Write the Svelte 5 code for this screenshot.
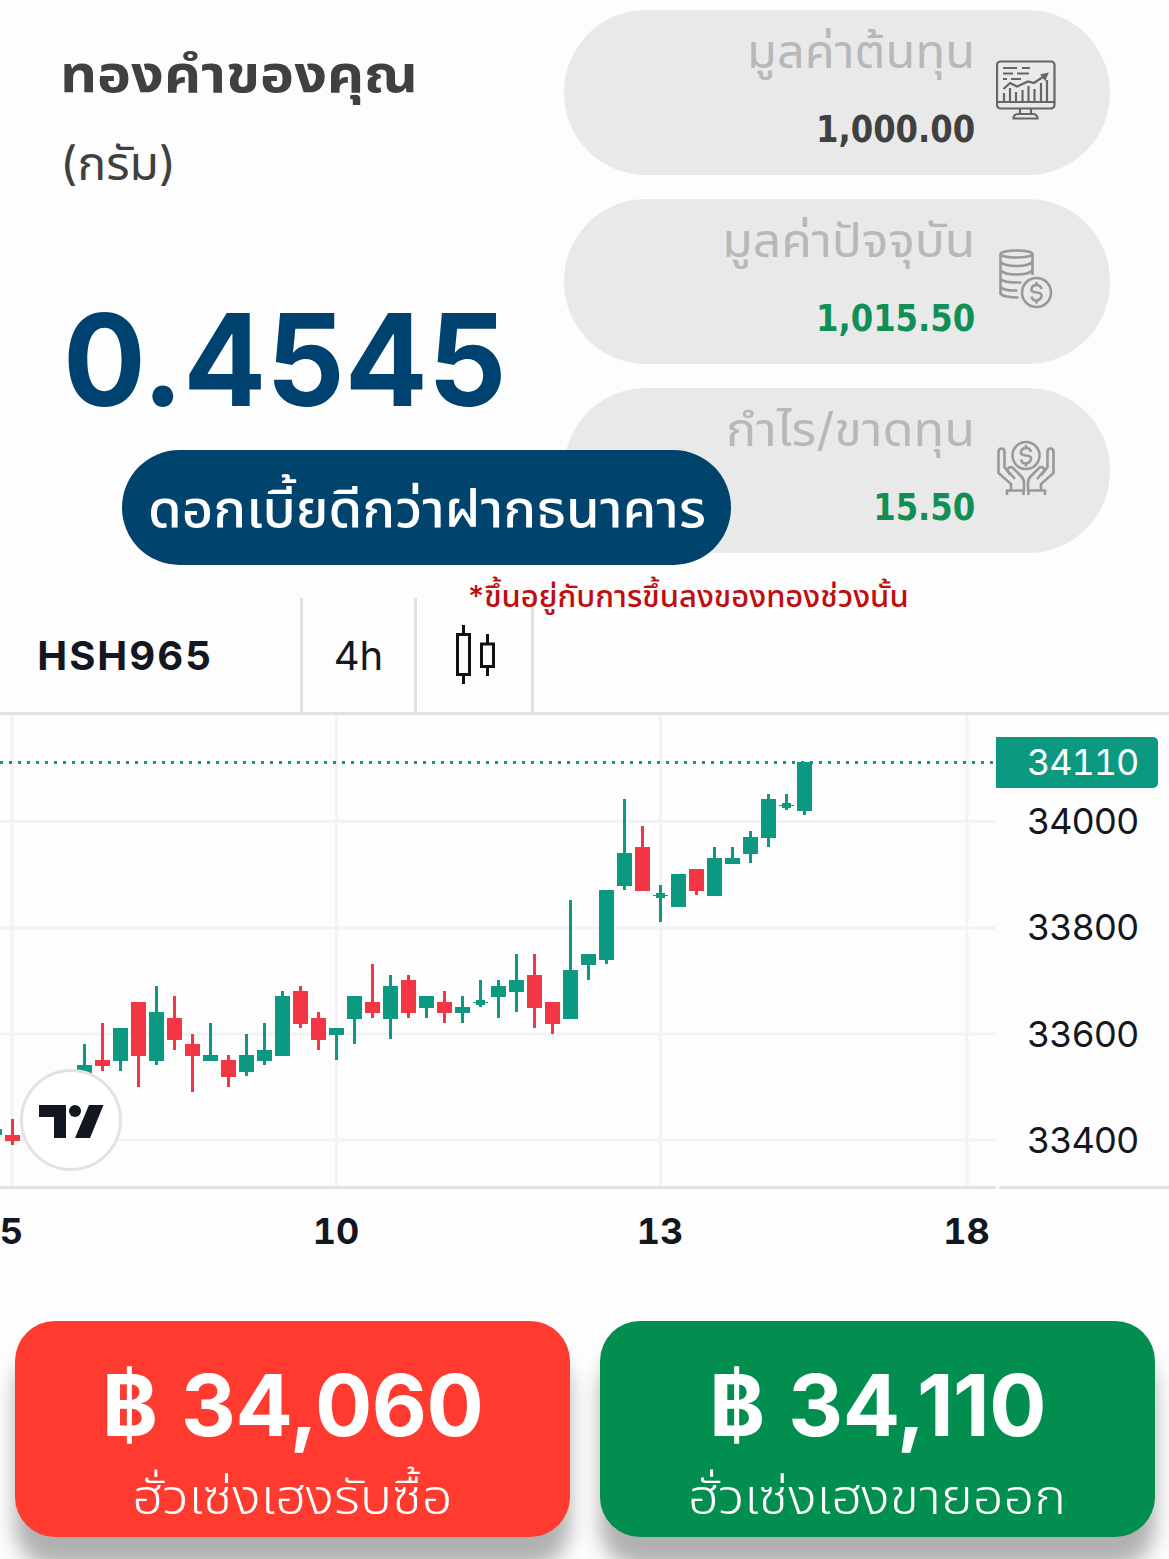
<script>
  const UP = '#0c9981';
  const DOWN = '#f23645';

  // [up, high, body top, body bottom, low], 18px apart from x = -5.5
  const candles = [
    [1, 1129, 1129, 1135, 1135], [0, 1119, 1135, 1141, 1145], null, null, null,
    [1, 1044, 1065, 1077, 1077], [0, 1023, 1060, 1066, 1071], [1, 1028, 1028, 1061, 1071],
    [0, 1002, 1002, 1056, 1087], [1, 986, 1012, 1061, 1065], [0, 996, 1018, 1040, 1050],
    [0, 1034, 1044, 1056, 1092], [1, 1023, 1055, 1061, 1061], [0, 1055, 1060, 1077, 1087],
    [1, 1034, 1055, 1072, 1076], [1, 1023, 1050, 1061, 1065], [1, 991, 996, 1056, 1056],
    [0, 986, 991, 1024, 1028], [0, 1012, 1018, 1040, 1050], [1, 1028, 1028, 1035, 1060],
    [1, 996, 996, 1019, 1044], [0, 964, 1002, 1013, 1018], [1, 975, 986, 1019, 1039],
    [0, 975, 980, 1013, 1018], [1, 996, 996, 1008, 1018], [0, 991, 1002, 1013, 1023],
    [1, 996, 1007, 1013, 1023], [1, 980, 1002, 1003, 1007], [1, 980, 986, 997, 1018],
    [1, 954, 980, 992, 1012], [0, 954, 975, 1008, 1028], [0, 1002, 1002, 1024, 1034],
    [1, 900, 970, 1019, 1019], [1, 954, 954, 965, 980], [1, 890, 890, 960, 964],
    [1, 799, 853, 886, 890], [0, 826, 847, 891, 891], [1, 885, 895, 896, 922],
    [1, 874, 874, 907, 907], [0, 869, 869, 891, 895], [1, 847, 858, 896, 896],
    [1, 847, 858, 864, 864], [1, 831, 837, 854, 863], [1, 794, 799, 838, 847],
    [1, 794, 805, 806, 810], [1, 762, 762, 811, 815],
  ];

  const prices = [
    { y: 821.5, label: '34000' },
    { y: 928, label: '33800' },
    { y: 1034, label: '33600' },
    { y: 1140, label: '33400' },
  ];

  const days = [
    { x: 11.5, label: '5' },
    { x: 336, label: '10' },
    { x: 660, label: '13' },
    { x: 966.5, label: '18' },
  ];

  const stats = [
    { label: 'มูลค่าต้นทุน', value: '1,000.00', icon: 'monitor', stretch: 1.06 },
    { label: 'มูลค่าปัจจุบัน', value: '1,015.50', icon: 'coins', stretch: 1.08, gain: true },
    { label: 'กำไร/ขาดทุน', value: '15.50', icon: 'hands', stretch: 1.097, gain: true },
  ];
</script>

<div class="page">
  <header>
    <div class="holding">
      <h1>ทองคำของคุณ</h1>
      <p class="unit">(กรัม)</p>
      <p class="amount">0.4545</p>
    </div>

    <div class="stats">
      {#each stats as stat}
        <div class="stat">
          <div class="stat-text">
            <span class="stat-label" style="transform: scaleX({stat.stretch})">{stat.label}</span>
            <span class="stat-value" class:gain={stat.gain}>{stat.value}</span>
          </div>
          {#if stat.icon === 'monitor'}
            <svg class="icon dark" viewBox="0 0 60 60">
              <rect x="1" y="1.5" width="57.5" height="47" rx="3.5"/>
              <path d="M1 42h57M24 49v6M35 49v6M17.500 58.500q0-4.500 5-4.500h14q5 0 5 4.500z"/>
              <path d="M7 8h14M26 8h8M7 13.500h10M21 13.500h12M7 19h4M15 19h10"/>
              <path d="M7.500 29l6.500-6 7 3.500 11-5 6 1.500L49 15.500M46 15l5-1-2 5z"/>
              <path d="M8 33v8M14 28v13M20 32v9M26.500 30v11M32.500 26v15M38.500 29v12M45 23v18M51 20v21"/>
            </svg>
          {:else if stat.icon === 'coins'}
            <svg class="icon" viewBox="0 0 60 60">
              <ellipse cx="20.5" cy="5" rx="16" ry="3.5"/>
              <path d="M4.500 5v40q4 3.500 18 3.500M36.500 5v21M4.500 13q4 4 16 4t16-4M4.500 21.500q4 4 16 4t16-4M4.500 30q4 4 21 3.500M4.500 38q4 4 17 3.500"/>
              <circle cx="40.5" cy="43.5" r="14.5"/>
              <path d="M45.500 40q-1-4-5-4t-5 3.500 5 4 5 4-5 4-5-4M40.500 33v3M40.500 51.500v3"/>
            </svg>
          {:else}
            <svg class="icon" viewBox="0 -2 60 60">
              <circle cx="30" cy="15.5" r="13.5"/>
              <path d="M35 12q-1-4-5-4t-5 3.500 5 4 5 4-5 4-5-4M30 5v3M30 23.500v3"/>
              <path d="M15 50.500V44L2.500 33V12q0-3.500 3-3.500t3 3.500v15l6 8M19 39l-7-8q-1-4 4-4l9 9q3 3 3 7v8M11 55v-4.500h18M27.500 51.500V55"/>
              <path d="M45 50.500V44l12.500-11V12q0-3.500-3-3.500t-3 3.500v15l-6 8M41 39l7-8q1-4-4-4l-9 9q-3 3-3 7v8M49 55v-4.500H31M32.500 51.500V55"/>
            </svg>
          {/if}
        </div>
      {/each}
    </div>

    <div class="banner"><span>ดอกเบี้ยดีกว่าฝากธนาคาร</span></div>
    <p class="note">*ขึ้นอยู่กับการขึ้นลงของทองช่วงนั้น</p>
  </header>

  <nav>
    <div class="symbol">HSH965</div>
    <div class="interval">4h</div>
    <div class="style">
      <svg width="44" height="62" viewBox="0 0 44 62">
        <path d="M11.500 1v9M11.500 51v9M5.500 10.500h12v40h-12zM35.500 10v9M35.500 43v9M29.500 20h12v22.500h-12z"/>
      </svg>
    </div>
  </nav>

  <div class="chart">
    <svg class="plot" width="996" height="471" viewBox="0 715 996 471">
      {#each prices as p}
        <rect class="grid" x="0" y={p.y - 1.5} width="996" height="3"/>
      {/each}
      {#each days as d}
        <rect class="grid" x={d.x - 1} y="715" width="3" height="471"/>
      {/each}
      <line x1="0" x2="996" y1="762.5" y2="762.5" stroke={UP} stroke-width="3" stroke-dasharray="3 6"/>
      {#each candles as c, i}
        {#if c}
          {@const x = 18 * i - 5.5}
          <g fill={c[0] ? UP : DOWN}>
            <rect x={x - 1.5} y={c[1]} width="3" height={c[4] - c[1]}/>
            <rect x={x - 7.5} y={c[2]} width="15" height={c[3] - c[2]}/>
            {#if c[3] - c[2] === 1}
              <rect x={x - 4.5} y={c[2] - 2} width="9" height="5"/>
            {/if}
          </g>
        {/if}
      {/each}
    </svg>
    <svg class="tv" width="102" height="102" viewBox="0 0 102 102">
      <circle cx="51" cy="51" r="49.5"/>
      <path d="M19 36h27v33H34V48H19zM69 36h14.500L70 69H55z"/>
      <circle class="dot" cx="55" cy="42" r="6"/>
    </svg>
    <div class="prices">
      <span class="last">34110</span>
      {#each prices as p}
        <span class="price">{p.label}</span>
      {/each}
    </div>
  </div>

  <div class="days">
    {#each days as d}
      <span style="left: {d.x}px">{d.label}</span>
    {/each}
  </div>

  <footer>
    <button class="buy">
      <strong>฿ 34,060</strong>
      <span>ฮั่วเซ่งเฮงรับซื้อ</span>
    </button>
    <button class="sell">
      <strong>฿ 34,110</strong>
      <span>ฮั่วเซ่งเฮงขายออก</span>
    </button>
  </footer>
</div>

<style>
  :global(body) {
    margin: 0;
    background: #fdfdfd;
  }

  .page {
    width: 1169px;
    height: 1559px;
    overflow: hidden;
    font-family: Inter, 'Noto Sans', 'Noto Sans Thai', sans-serif;
    color: #131722;
  }

  h1, p {
    margin: 0;
    white-space: nowrap;
  }

  header {
    position: relative;
    display: flex;
    height: 598px;
    box-sizing: border-box;
    padding: 10px 59px 0 60px;
    justify-content: space-between;
  }

  .holding {
    width: 480px;
    color: #404040;
  }

  .holding > * {
    transform-origin: left;
  }

  h1 {
    margin-top: 29px;
    font-size: 51px;
    line-height: 70px;
    transform: scaleX(1.127);
  }

  .unit {
    margin-top: 16px;
    font-size: 46px;
    line-height: 76px;
    font-weight: 400;
    transform: scaleX(1.04);
  }

  .amount {
    margin-top: 79px;
    padding-left: 3px;
    font-size: 128px;
    line-height: 160px;
    font-weight: 700;
    color: #00426f;
    transform: scaleX(.96);
  }

  .stats {
    display: flex;
    flex-direction: column;
    gap: 24px;
  }

  .stat {
    display: flex;
    box-sizing: border-box;
    width: 546px;
    height: 165px;
    padding: 9px 54px 0 0;
    border-radius: 82px;
    background: #e9e9e9;
    justify-content: flex-end;
    gap: 21px;
  }

  .stat-text {
    display: flex;
    flex-direction: column;
    align-items: flex-end;
  }

  .stat-text span {
    transform-origin: right;
  }

  .stat-label {
    font-size: 46px;
    line-height: 64px;
    font-weight: 400;
    color: #b8b8b8;
  }

  .stat-value {
    margin-top: 24px;
    font-family: 'DejaVu Sans Condensed', 'DejaVu Sans', sans-serif;
    font-stretch: condensed;
    font-size: 37px;
    line-height: 46px;
    font-weight: 700;
    color: #404040;
    transform: scaleX(.97);
  }

  .stat-value.gain {
    color: #118f55;
  }

  .icon {
    width: 60px;
    height: 60px;
    margin-top: 41px;
    fill: none;
    stroke: #999;
    stroke-width: 2.6;
  }

  .dark {
    stroke: #666;
    stroke-width: 2.2;
  }

  .banner {
    position: absolute;
    left: 122px;
    top: 450px;
    display: flex;
    justify-content: center;
    width: 609px;
    height: 115px;
    border-radius: 58px;
    background: #00436d;
    color: #fff;
    font-size: 52px;
    line-height: 118px;
    font-weight: 500;
  }

  .banner span {
    transform: scaleX(1.045);
  }

  .note {
    position: absolute;
    left: 468px;
    top: 574px;
    font-size: 30px;
    line-height: 44px;
    font-weight: 500;
    color: #c00d0d;
    transform: scaleX(1.033);
    transform-origin: left;
  }

  nav {
    display: flex;
    height: 114px;
    border-bottom: 3px solid #e0e1e7;
  }

  nav div {
    display: flex;
    box-sizing: border-box;
    align-items: center;
    justify-content: center;
    border-right: 3px solid #e0e1e7;
    font-size: 40px;
  }

  .symbol {
    width: 303px;
    padding-right: 50px;
    font-weight: 700;
    letter-spacing: 2px;
  }

  .interval {
    width: 114px;
  }

  .style {
    width: 117px;
  }

  .style svg {
    fill: none;
    stroke: #111;
    stroke-width: 3;
  }

  .chart {
    position: relative;
    display: flex;
    height: 474px;
  }

  .plot {
    border-bottom: 3px solid #e0e1e7;
  }

  .grid {
    fill: #f3f3f4;
  }

  .tv {
    position: absolute;
    left: 20px;
    top: 354px;
    fill: #131722;
  }

  .tv circle:not(.dot) {
    fill: #fff;
    stroke: #e2e2e4;
    stroke-width: 3;
  }

  .prices {
    display: flex;
    flex: 1;
    flex-direction: column;
    box-sizing: border-box;
    height: 474px;
    margin-left: 3px;
    padding-top: 22px;
    border-bottom: 3px solid #e0e1e7;
    font-size: 36px;
    font-variant-numeric: tabular-nums;
    letter-spacing: -1.1px;
  }

  .prices span {
    flex-shrink: 0;
    margin-left: -3px;
    padding-left: 31px;
  }

  .last {
    width: 131px;
    height: 51px;
    margin-bottom: 7px;
    border-radius: 0 5px 5px 0;
    background: #0c9981;
    color: #fff;
    line-height: 51px;
  }

  .price {
    height: 106.3px;
    line-height: 52px;
  }

  .price:last-child {
    height: 52px;
  }

  .days {
    position: relative;
    height: 132px;
  }

  .days span {
    position: absolute;
    top: 16px;
    font-size: 36px;
    line-height: 52px;
    font-weight: 700;
    font-variant-numeric: tabular-nums;
    transform: translateX(-50%);
  }

  footer {
    display: flex;
    gap: 30px;
    padding-left: 15px;
  }

  button {
    display: flex;
    flex-direction: column;
    align-items: center;
    box-sizing: border-box;
    width: 555px;
    height: 216px;
    padding: 31px 0 0;
    border: 0;
    border-radius: 40px;
    box-shadow: 0 30px 20px #0000004d;
    color: #fff;
    font-family: Inter, 'Noto Sans Thai', sans-serif;
  }

  strong {
    font-size: 85px;
    line-height: 108px;
    font-weight: 700;
    word-spacing: 4px;
    letter-spacing: -.5px;
  }

  button span {
    font-size: 48px;
    line-height: 74px;
    font-weight: 300;
    transform: scaleX(1.125);
  }

  .buy {
    background: #ff3a2f;
  }

  .sell {
    background: #028e4f;
  }
</style>
